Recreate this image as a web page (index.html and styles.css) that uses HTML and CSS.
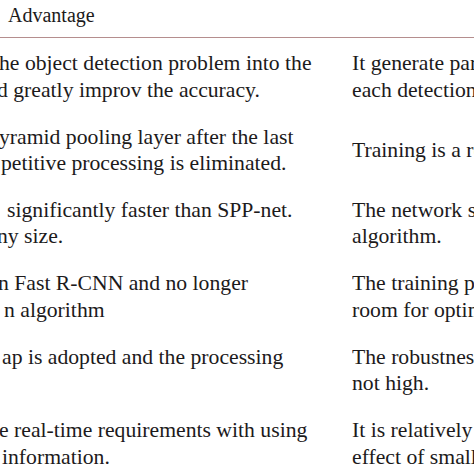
FILE: index.html
```html
<!DOCTYPE html>
<html>
<head>
<meta charset="utf-8">
<link rel="stylesheet" href="styles.css">
</head>
<body>
<div class="page">
  <div class="head">
    <div class="hcell">Advantage</div>
  </div>
  <div class="table">
    <div class="row">
      <div class="cell left">
        <div class="ln i-m1">he object detection problem into the</div>
        <div class="ln i-m3">d greatly improv the accuracy.</div>
      </div>
      <div class="cell right">
        <div class="ln">It generate particular candidate regions for</div>
        <div class="ln">each detection region</div>
      </div>
    </div>
    <div class="row">
      <div class="cell left">
        <div class="ln i-m1">yramid pooling layer after the last</div>
        <div class="ln i-1">petitive processing is eliminated.</div>
      </div>
      <div class="cell right">
        <div class="ln">Training is a redundant process.</div>
      </div>
    </div>
    <div class="row">
      <div class="cell left">
        <div class="ln i-7">significantly faster than SPP-net.</div>
        <div class="ln i-m3">ny size.</div>
      </div>
      <div class="cell right">
        <div class="ln">The network structure depends on the search</div>
        <div class="ln">algorithm.</div>
      </div>
    </div>
    <div class="row">
      <div class="cell left">
        <div class="ln i-m2">n Fast R-CNN and no longer</div>
        <div class="ln i-4">n algorithm</div>
      </div>
      <div class="cell right">
        <div class="ln">The training process is complex and there is</div>
        <div class="ln">room for optimization.</div>
      </div>
    </div>
    <div class="row">
      <div class="cell left">
        <div class="ln i-2">ap is adopted and the processing</div>
        <div class="ln">&nbsp;</div>
      </div>
      <div class="cell right">
        <div class="ln">The robustness of the algorithm is</div>
        <div class="ln">not high.</div>
      </div>
    </div>
    <div class="row">
      <div class="cell left">
        <div class="ln i-m1">e real-time requirements with using</div>
        <div class="ln i-2">information.</div>
      </div>
      <div class="cell right">
        <div class="ln">It is relatively poor in the detection</div>
        <div class="ln">effect of small objects.</div>
      </div>
    </div>
  </div>
</div>
</body>
</html>
```

FILE: styles.css
```css
html, body {
  margin: 0;
  padding: 0;
  background: #ffffff;
}
body {
  width: 474px;
  height: 474px;
  overflow: hidden;
  font-family: "Liberation Serif", "Times New Roman", serif;
  color: #1c1a1b;
}
.page {
  width: 474px;
  overflow: hidden;
}
.head {
  display: flex;
  padding-top: 2px;
  padding-bottom: 10px;
  border-bottom: 1px solid #b58e8e;
  height: 25px;
}
.hcell {
  font-size: 20px;
  line-height: 26px;
  padding-left: 8px;
}
.table {
  display: flex;
  flex-direction: column;
  padding-top: 2px;
}
.row {
  display: grid;
  grid-template-columns: 352px 1fr;
  align-items: center;
  height: 73.4px;
}
.cell {
  overflow: hidden;
  white-space: nowrap;
  font-size: 21.7px;
  line-height: 26.5px;
}
.ln {
  white-space: nowrap;
}
.right {
  min-width: 0;
}
.i-m1 { text-indent: -1px; }
.i-m2 { text-indent: -2px; }
.i-m3 { text-indent: -3px; }
.i-1 { text-indent: 1px; }
.i-2 { text-indent: 2px; }
.i-4 { text-indent: 4px; }
.i-7 { text-indent: 7px; }
```
